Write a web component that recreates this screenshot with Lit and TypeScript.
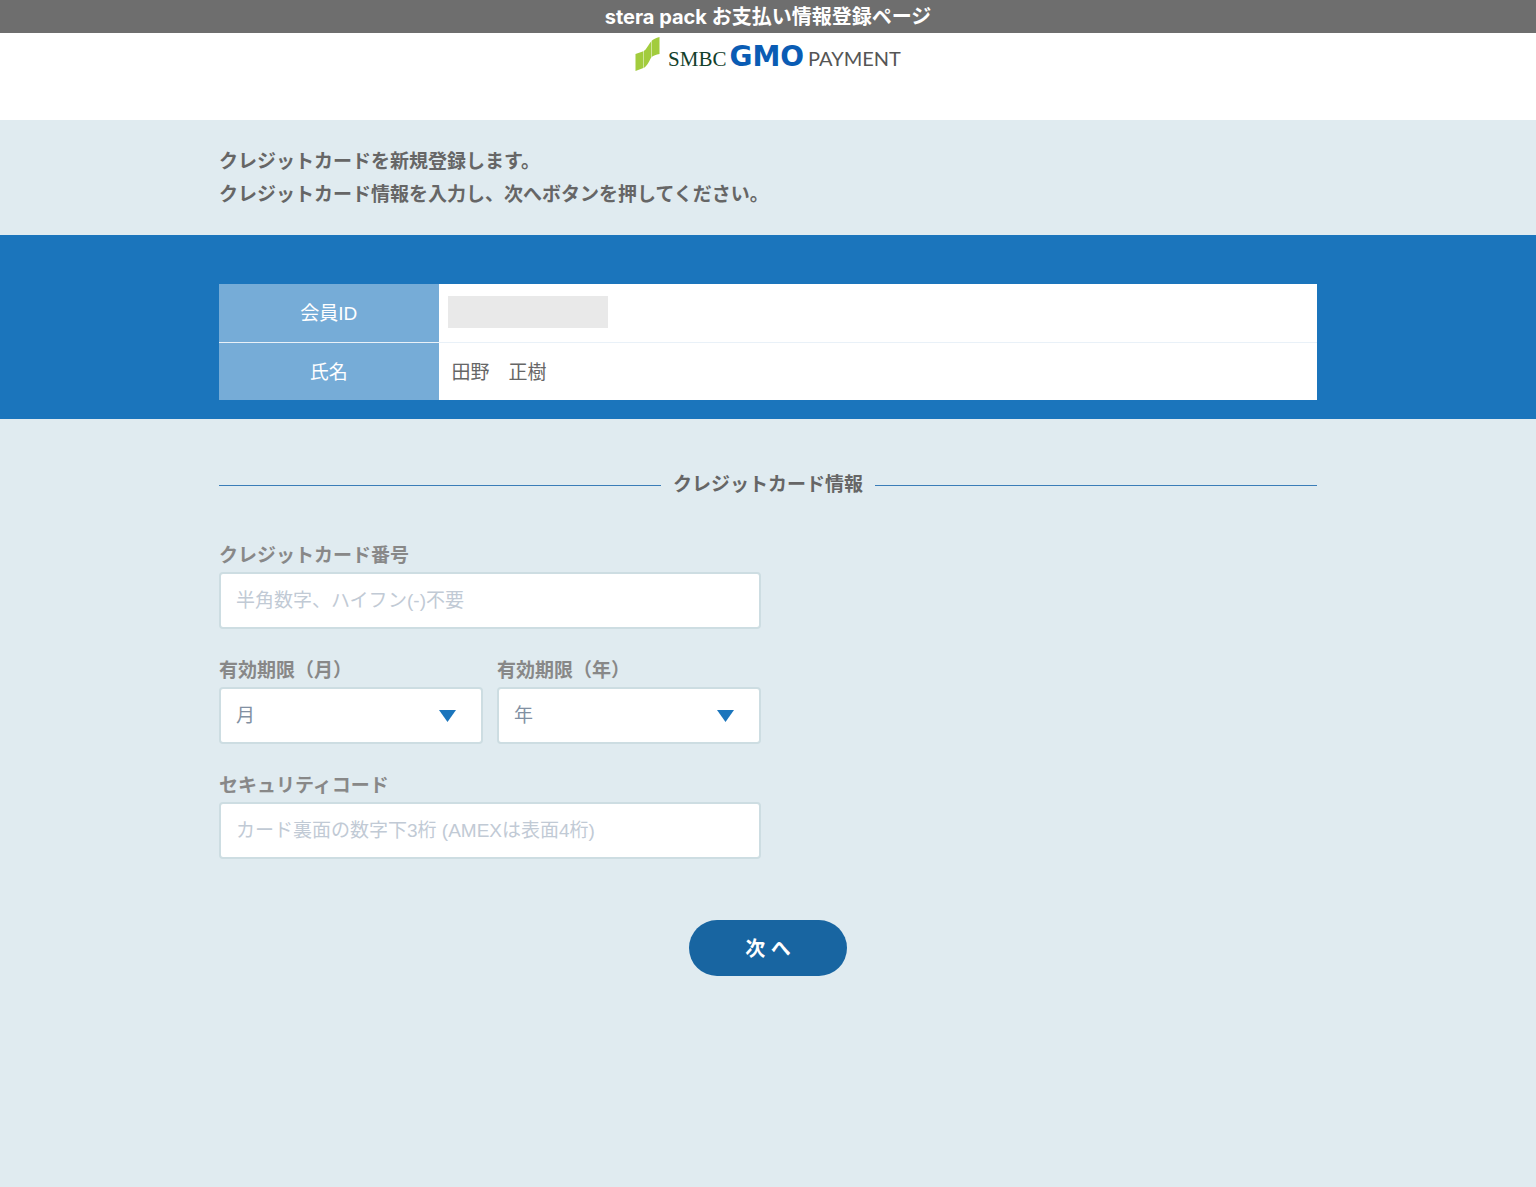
import { LitElement, html, css, svg } from "lit";
import { customElement, property } from "lit/decorators.js";

const MONTHS = Array.from({ length: 12 }, (_, i) => String(i + 1).padStart(2, "0"));
const YEARS = Array.from({ length: 10 }, (_, i) => String(2024 + i));

@customElement("company-logo")
export class CompanyLogo extends LitElement {
  static styles = css`
    :host {
      display: flex;
      align-items: center;
      justify-content: center;
      height: 34px;
    }
    .mark {
      width: 25px;
      height: 34px;
      margin-right: 8px;
    }
    .name {
      display: flex;
      align-items: baseline;
      line-height: 34px;
      padding-top: 7px;
    }
    .smbc {
      font-family: "Liberation Serif", serif;
      font-size: 21px;
      color: #12402b;
    }
    .gmo {
      font-family: "DejaVu Sans", sans-serif;
      font-weight: 700;
      font-size: 28px;
      color: #0a5cb4;
      margin: 0 4px 0 3px;
    }
    .payment {
      font-family: Lato, sans-serif;
      font-size: 20px;
      color: #555555;
    }
  `;

  render() {
    return html`
      <svg class="mark" viewBox="0 0 25 34" aria-hidden="true">
        ${svg`
          <path fill="#a2cc3d" d="M0.500 17 8.400 14.200v16.900L0.500 34z" />
          <path fill="#a2cc3d" d="M8.800 14C11.500 12.500 13 8 16.300 4.200V20.500C14.500 23 12.500 29 8.800 30.900z" />
          <path fill="#a2cc3d" d="M16.700 3.800C18 2.200 21 1 24.500 0v17C21 17.800 18.500 18.400 16.700 20.100z" />
        `}
      </svg>
      <span class="name"
        ><span class="smbc">SMBC</span><span class="gmo">GMO</span
        ><span class="payment">PAYMENT</span></span
      >
    `;
  }
}

@customElement("select-field")
export class SelectField extends LitElement {
  @property() label = "";
  @property() prompt = "";
  @property({ attribute: false }) choices: string[] = [];

  static styles = css`
    :host {
      display: block;
      min-width: 0;
    }
    .label {
      display: block;
      font-weight: 700;
      line-height: 32px;
      color: #888888;
    }
    .control {
      display: grid;
      align-items: center;
    }
    .select,
    .arrow {
      grid-area: 1 / 1;
    }
    .select {
      box-sizing: border-box;
      width: 100%;
      height: 57px;
      padding: 0 48px 0 15px;
      border: 2px solid #cddde2;
      border-radius: 4px;
      background: #ffffff;
      color: #8290a2;
      font: inherit;
      appearance: none;
    }
    .arrow {
      justify-self: end;
      width: 17px;
      height: 12px;
      margin-right: 27px;
      pointer-events: none;
    }
  `;

  render() {
    return html`
      <label class="label" for="choice">${this.label}</label>
      <div class="control">
        <select class="select" id="choice">
          <option value="">${this.prompt}</option>
          ${this.choices.map((c) => html`<option value=${c}>${c}</option>`)}
        </select>
        <svg class="arrow" viewBox="0 0 17 12" aria-hidden="true">
          <path fill="#1b75bc" d="M0 0h17L8.500 12z" />
        </svg>
      </div>
    `;
  }
}

@customElement("text-field")
export class TextField extends LitElement {
  @property() label = "";
  @property() hint = "";

  static styles = css`
    :host {
      display: block;
    }
    .label {
      display: block;
      font-weight: 700;
      line-height: 32px;
      color: #888888;
    }
    .input {
      box-sizing: border-box;
      display: block;
      width: 100%;
      height: 57px;
      padding: 0 15px;
      border: 2px solid #cddde2;
      border-radius: 4px;
      background: #ffffff;
      color: #666666;
      font: inherit;
    }
    .input::placeholder {
      color: #c1cad5;
      opacity: 1;
    }
  `;

  render() {
    return html`
      <label class="label" for="entry">${this.label}</label>
      <input class="input" id="entry" type="text" inputmode="numeric" placeholder=${this.hint} />
    `;
  }
}

@customElement("app-root")
export class AppRoot extends LitElement {
  static styles = css`
    :host {
      display: block;
      min-height: 100vh;
      background: #e0ebf0;
      color: #666666;
      font-family: "Liberation Sans", "Noto Sans CJK JP", sans-serif;
      font-size: 19px;
    }
    .inner {
      width: calc(100% - 40px);
      max-width: 1098px;
      margin: 0 auto;
    }
    .title {
      margin: 0;
      padding-top: 2px;
      background: #6e6e6e;
      color: #ffffff;
      font-family: Inter, "Noto Sans CJK JP", sans-serif;
      font-size: 20px;
      font-weight: 700;
      line-height: 31px;
      text-align: center;
    }
    .brand {
      background: #ffffff;
      padding: 4px 0 49px;
    }
    .intro {
      padding: 25px 0 24px;
    }
    .lead {
      font-weight: 700;
      line-height: 33px;
    }
    .member {
      background: #1b75bc;
      padding: 49px 0 19px;
    }
    .table {
      width: 100%;
      border-collapse: collapse;
      table-layout: fixed;
      background: #ffffff;
    }
    .row {
      height: 58px;
    }
    .row + .row {
      border-top: 1px solid #e9f1f8;
    }
    .head {
      width: 20%;
      padding: 0 0 2px;
      background: #76acd7;
      color: #ffffff;
      font-weight: 400;
      text-align: center;
    }
    .value {
      padding: 0 13px 2px;
    }
    .value.masked {
      padding: 0 9px 2px;
    }
    .mask {
      width: 160px;
      height: 32px;
      background: #e9e9e9;
    }
    .card {
      padding: 51px 0 60px;
    }
    .heading {
      display: flex;
      align-items: center;
      gap: 12px;
      margin: 0 0 40px;
      font-size: inherit;
      font-weight: 700;
      line-height: 30px;
    }
    .heading::before,
    .heading::after {
      content: "";
      flex: 1;
      height: 1px;
      background: #3a7db8;
    }
    .fields {
      display: flex;
      flex-direction: column;
      gap: 26px;
      max-width: 542px;
    }
    .expiry {
      display: grid;
      grid-template-columns: 1fr 1fr;
      gap: 14px;
    }
    .next {
      display: block;
      height: 56px;
      margin: 61px auto 0;
      padding: 0 56px 2px;
      border: 0;
      border-radius: 28px;
      background: #1865a1;
      color: #ffffff;
      font: inherit;
      font-size: 20px;
      font-weight: 700;
    }
  `;

  render() {
    return html`
      <header>
        <h1 class="title">stera pack お支払い情報登録ページ</h1>
        <div class="brand"><company-logo></company-logo></div>
      </header>
      <main>
        <section class="intro">
          <p class="lead inner">
            クレジットカードを新規登録します。<br />クレジットカード情報を入力し、次へボタンを押してください。
          </p>
        </section>
        <section class="member">
          <div class="inner">
            <table class="table">
              <tbody>
                <tr class="row">
                  <th class="head" scope="row">会員ID</th>
                  <td class="value masked"><div class="mask"></div></td>
                </tr>
                <tr class="row">
                  <th class="head" scope="row">氏名</th>
                  <td class="value">田野　正樹</td>
                </tr>
              </tbody>
            </table>
          </div>
        </section>
        <form class="card inner">
          <h2 class="heading">クレジットカード情報</h2>
          <div class="fields">
            <text-field label="クレジットカード番号" hint="半角数字、ハイフン(-)不要"></text-field>
            <div class="expiry">
              <select-field label="有効期限（月）" prompt="月" .choices=${MONTHS}></select-field>
              <select-field label="有効期限（年）" prompt="年" .choices=${YEARS}></select-field>
            </div>
            <text-field
              label="セキュリティコード"
              hint="カード裏面の数字下3桁 (AMEXは表面4桁)"
            ></text-field>
          </div>
          <button class="next" type="button">次 へ</button>
        </form>
      </main>
    `;
  }
}
